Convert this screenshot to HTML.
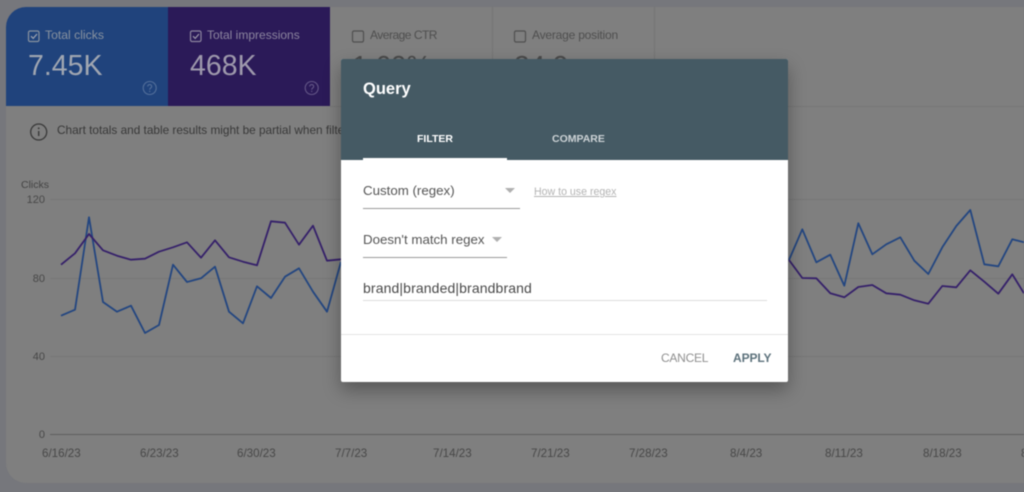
<!DOCTYPE html>
<html><head><meta charset="utf-8"><title>Query filter</title>
<style>
html,body{margin:0;padding:0;width:1024px;height:492px;overflow:hidden;background:#76777c;font-family:"Liberation Sans",sans-serif}
#w{position:relative;width:1024px;height:492px;overflow:hidden;filter:blur(.4px)}
.t{position:absolute;white-space:nowrap;line-height:1}
.b{position:absolute}
.y{font-size:11px;color:#484848;left:15px;width:30px;text-align:right}
.d{font-size:11.6px;color:#484848;top:448px}
svg{position:absolute;left:0;top:0}
</style></head><body><div id="w">
<div class="b" style="left:6px;top:7px;width:1030px;height:476px;background:#7f7f7f;border-radius:20px 0 0 20px"></div>
<div class="b" style="left:6px;top:7px;width:162px;height:99px;background:#20437c;border-radius:20px 0 0 0"></div>
<div class="b" style="left:168px;top:7px;width:162px;height:99px;background:#2b1a58"></div>
<div class="b" style="left:492px;top:7px;width:1px;height:99px;background:#747474"></div>
<div class="b" style="left:654px;top:7px;width:1px;height:99px;background:#747474"></div>
<div class="b" style="left:330px;top:106px;width:694px;height:1px;background:#777"></div>

<div class="t" style="left:45px;top:29px;font-size:12.2px;color:#88929f">Total clicks</div>
<div class="t" style="left:207px;top:29px;font-size:12px;color:#8c859f">Total impressions</div>
<div class="t" style="left:370px;top:29px;font-size:12px;letter-spacing:-.5px;color:#4f4f4f">Average CTR</div>
<div class="t" style="left:532px;top:29px;font-size:12px;letter-spacing:-.2px;color:#4f4f4f">Average position</div>
<div class="t" style="left:28px;top:52px;font-size:28.5px;color:#a0a6b1">7.45K</div>
<div class="t" style="left:190px;top:52px;font-size:28.5px;color:#9e99ac">468K</div>
<div class="t" style="left:352px;top:52px;font-size:28px;color:#4a4a4a">1.60%</div>
<div class="t" style="left:514px;top:52px;font-size:28px;color:#4a4a4a">24.9</div>
<div class="t" style="left:57px;top:125px;font-size:11.8px;color:#383838">Chart totals and table results might be partial when filtering</div>
<div class="t" style="left:21px;top:180px;font-size:10.5px;color:#444">Clicks</div>

<div class="t y" style="top:194.5px">120</div>
<div class="t y" style="top:273.5px">80</div>
<div class="t y" style="top:351.5px">40</div>
<div class="t y" style="top:429.5px">0</div>

<div class="t d" style="left:42px">6/16/23</div>
<div class="t d" style="left:140px">6/23/23</div>
<div class="t d" style="left:237px">6/30/23</div>
<div class="t d" style="left:335px">7/7/23</div>
<div class="t d" style="left:433px">7/14/23</div>
<div class="t d" style="left:531px">7/21/23</div>
<div class="t d" style="left:629px">7/28/23</div>
<div class="t d" style="left:730px">8/4/23</div>
<div class="t d" style="left:825px">8/11/23</div>
<div class="t d" style="left:923px">8/18/23</div>
<div class="t d" style="left:1021px">8/25/23</div>

<svg width="1024" height="492" viewBox="0 0 1024 492">
<g fill="none">
<path d="M50 199.5H1024M50 278.5H1024M50 356.5H1024" stroke="#777" stroke-width="1"/>
<path d="M50 434.5H1024" stroke="#5f5f5f" stroke-width="1"/>
<polyline stroke-width="1.8" stroke="#234680" stroke-linejoin="round" points="61,315.7 75,309.7 89,217.3 103,302 117,311.7 131,305.7 145,333 159,325 173,264.7 187,282 201,278.3 215,266.7 229,311.7 243,323.3 257,286.3 271,298 285,276.7 299,268.3 313,291.7 327,311.7 341,261.7"/>
<polyline stroke-width="1.8" stroke="#35206a" stroke-linejoin="round" points="61,264.7 75,253.3 89,234 103,250.3 117,255.7 131,259.7 145,258.7 159,251.7 173,247.3 187,242.3 201,257.7 215,240.3 229,257.3 243,261.7 257,265.3 271,221.3 285,222.7 299,244.7 313,225.7 327,260.7 341,259.3"/>
<polyline stroke-width="1.8" stroke="#234680" stroke-linejoin="round" points="789,260 802.3,229.3 816.3,262.3 830.3,254.7 844.3,285.7 858.3,223.3 872.3,254.3 886.3,244.3 900.3,237.3 914.3,260.7 928.3,274 942.3,247.3 956.3,226 970.3,210 984.3,264.3 998.3,266.3 1012.3,239.3 1024,242.3"/>
<polyline stroke-width="1.8" stroke="#35206a" stroke-linejoin="round" points="789,260 802.3,278 816.3,278.3 830.3,293.3 844.3,297.3 858.3,287 872.3,285 886.3,293.3 900.3,294.7 914.3,300.3 928.3,303.7 942.3,286 956.3,287.3 970.3,270.3 984.3,281.7 998.3,293.7 1012.3,274.3 1024,293.3"/>
<!-- checkboxes -->
<rect x="28.5" y="31" width="10.5" height="10.5" rx="1.5" stroke="#88929f" stroke-width="1.2"/>
<path d="M31 36.2l2.2 2.2 3.8-4.4" stroke="#a0a6b1" stroke-width="1.2"/>
<rect x="190.5" y="31" width="10.5" height="10.5" rx="1.5" stroke="#8c859f" stroke-width="1.2"/>
<path d="M193 36.2l2.2 2.2 3.8-4.4" stroke="#9e99ac" stroke-width="1.2"/>
<rect x="352.5" y="31" width="11" height="11" rx="1.5" stroke="#4f4f4f" stroke-width="1.2"/>
<rect x="514.5" y="31" width="11" height="11" rx="1.5" stroke="#4f4f4f" stroke-width="1.2"/>
<!-- help icons -->
<circle cx="149.7" cy="88" r="6.5" stroke="#54709b" stroke-width="1.1"/>
<path d="M147.7 86.5c0-2.6 4-2.6 4 0 0 1.5-2 1.5-2 3.2" stroke="#54709b" stroke-width="1.1"/>
<circle cx="149.7" cy="91.4" r=".7" fill="#54709b"/>
<circle cx="311.7" cy="88" r="6.5" stroke="#655888" stroke-width="1.1"/>
<path d="M309.7 86.5c0-2.6 4-2.6 4 0 0 1.5-2 1.5-2 3.2" stroke="#655888" stroke-width="1.1"/>
<circle cx="311.7" cy="91.4" r=".7" fill="#655888"/>
<!-- info icon -->
<circle cx="38.7" cy="132" r="8" stroke="#383838" stroke-width="1.3"/>
<path d="M38.7 131v5" stroke="#383838" stroke-width="1.4"/>
<circle cx="38.7" cy="128.3" r=".9" fill="#383838"/>
</g>
</svg>

<!-- dialog -->
<div class="b" style="left:341px;top:59px;width:447px;height:323px;background:#fff;border-radius:2px;box-shadow:0 8px 18px rgba(0,0,0,.32)"></div>
<div class="b" style="left:341px;top:59px;width:447px;height:101px;background:#455a64;border-radius:2px 2px 0 0"></div>
<div class="t" style="left:363px;top:81px;font-size:16.5px;font-weight:bold;color:#fff">Query</div>
<div class="t" style="left:417px;top:133.5px;font-size:10.5px;font-weight:bold;color:#fff">FILTER</div>
<div class="t" style="left:552px;top:133.5px;font-size:10.5px;font-weight:bold;color:#cdd3d6">COMPARE</div>
<div class="b" style="left:363px;top:158px;width:144px;height:2px;background:#fff"></div>

<div class="t" style="left:363px;top:184px;font-size:13.3px;color:#555">Custom (regex)</div>
<div class="b" style="left:505px;top:188px;width:0;height:0;border-left:5px solid transparent;border-right:5px solid transparent;border-top:5.5px solid #b0b0b0"></div>
<div class="t" style="left:534px;top:187px;font-size:10.6px;color:#b3b3b3;text-decoration:underline">How to use regex</div>
<div class="b" style="left:363px;top:208px;width:157px;height:1px;background:#9a9a9a"></div>

<div class="t" style="left:363px;top:233px;font-size:13.3px;color:#555">Doesn't match regex</div>
<div class="b" style="left:492px;top:237px;width:0;height:0;border-left:5px solid transparent;border-right:5px solid transparent;border-top:5.5px solid #b0b0b0"></div>
<div class="b" style="left:363px;top:257px;width:144px;height:1px;background:#9a9a9a"></div>

<div class="t" style="left:363px;top:281px;font-size:14px;letter-spacing:.12px;color:#4a4a4a">brand|branded|brandbrand</div>
<div class="b" style="left:363px;top:300px;width:404px;height:1px;background:#dcdcdc"></div>

<div class="b" style="left:341px;top:334px;width:447px;height:1px;background:#e4e4e4"></div>
<div class="t" style="left:661px;top:352px;font-size:12px;letter-spacing:-.25px;color:#8f8f8f">CANCEL</div>
<div class="t" style="left:733px;top:352px;font-size:12px;font-weight:bold;letter-spacing:-.1px;color:#5d727c">APPLY</div>
</div></body></html>
